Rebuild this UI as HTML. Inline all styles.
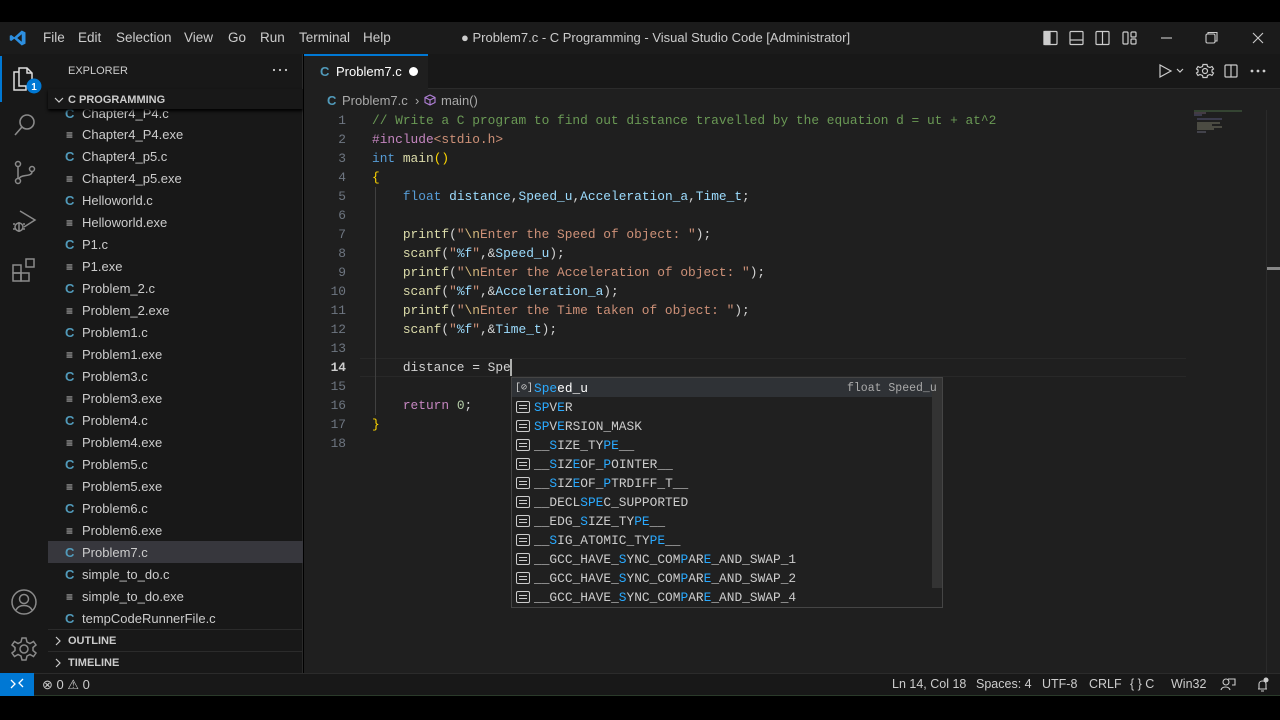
<!DOCTYPE html>
<html><head><meta charset="utf-8"><style>
*{margin:0;padding:0;box-sizing:border-box}
body{width:1280px;height:720px;background:#000;position:relative;overflow:hidden;font-family:"Liberation Sans",sans-serif;font-size:13px;color:#ccc}
.a{position:absolute}
.ui{white-space:nowrap}
.mono{font-family:"Liberation Mono",monospace;font-size:12.85px;white-space:pre}
.ln{position:absolute;left:318px;width:28px;text-align:right;color:#6e7681;font-family:"Liberation Mono",monospace;font-size:12.85px;line-height:19px}
.cl{position:absolute;left:372px;line-height:19px}
.cm{color:#6a9955}.kw{color:#569cd6}.pp{color:#c586c0}.st{color:#ce9178}.fn{color:#dcdcaa}.vr{color:#9cdcfe}.es{color:#d7ba7d}.nu{color:#b5cea8}.br{color:#ffd700}.pl{color:#d4d4d4}
.fi{position:absolute;left:48px;width:255px;height:22px;line-height:22px}
.fi .ic{position:absolute;left:17px;font-weight:bold;color:#519aba;font-size:13px}
.fi .ex{position:absolute;left:18px;top:0;color:#ccc;font-size:12px}
.fi .nm{position:absolute;left:34px;color:#ccc}
.sg{position:absolute;left:0;width:431px;height:19px;line-height:19px}
.sg .i{position:absolute;left:4px;top:3px;width:14px;height:12px;border:1.3px solid #ccc;border-radius:2px}
.sg .i:before{content:"";position:absolute;left:2px;right:2px;top:3px;height:1.3px;background:#ccc;box-shadow:0 3px 0 #ccc}
.sg .t{position:absolute;left:22px;color:#ccc}
.h{color:#2aaaff}
</style></head><body>
<div class="a" style="left:0;top:22px;width:1280px;height:32px;background:#1b1b1b"></div>
<svg class="a" style="left:9px;top:29px" width="18" height="18" viewBox="0 0 24 24"><path d="M17 2 L22 4.5 V19.5 L17 22 L7 13 L3 16 L1 15 V9 L3 8 L7 11 L17 2 Z M17 7 L11 12 L17 17 Z" fill="#2d8fe0"/></svg>
<div class="a ui" style="top:30px;left:43px;font-size:13.5px;color:#ccc">
<span style="position:absolute;left:0">File</span><span style="position:absolute;left:35px">Edit</span><span style="position:absolute;left:73px">Selection</span><span style="position:absolute;left:141px">View</span><span style="position:absolute;left:185px">Go</span><span style="position:absolute;left:217px">Run</span><span style="position:absolute;left:256px">Terminal</span><span style="position:absolute;left:320px">Help</span></div>
<div class="a ui" style="left:461px;top:30px;font-size:13px;color:#ccc">● Problem7.c - C Programming - Visual Studio Code [Administrator]</div>
<svg class="a" style="left:1042px;top:30px" width="130" height="16" fill="none" stroke="#ccc" stroke-width="1.2">
<rect x="2" y="1.5" width="13" height="13" rx="1"/><rect x="2" y="1.5" width="6" height="13" fill="#ccc"/>
<rect x="28" y="1.5" width="13" height="13" rx="1"/><line x1="28" y1="10" x2="41" y2="10"/>
<rect x="54" y="1.5" width="13" height="13" rx="1"/><line x1="60.5" y1="1.5" x2="60.5" y2="14.5"/>
<rect x="81" y="2" width="5" height="12" rx="1"/><rect x="89" y="2" width="5" height="5" rx="1"/><rect x="89" y="9" width="5" height="5" rx="1"/></svg>
<svg class="a" style="left:1158px;top:30px" width="110" height="16" fill="none" stroke="#ccc" stroke-width="1.1">
<line x1="3" y1="8" x2="14" y2="8"/><rect x="48" y="4" width="9" height="9" rx="1.5"/><path d="M50 4 V2.5 H59 V11 H57"/><path d="M95 3 L105 13 M105 3 L95 13"/></svg>
<div class="a" style="left:0;top:54px;width:48px;height:619px;background:#181818"></div>
<div class="a" style="left:0;top:56px;width:2px;height:46px;background:#0078d4"></div>
<svg class="a" style="left:10px;top:62px" width="34" height="34" fill="none" stroke="#ddd" stroke-width="1.5"><path d="M9 6 H17 L22 11 V24 H9 Z"/><path d="M17 6 V11 H22"/><path d="M9 10 H4 V28 H16 V24"/><circle cx="24" cy="24" r="7.5" fill="#0078d4" stroke="none"/><text x="24" y="28" font-size="10" fill="#fff" stroke="none" text-anchor="middle" font-family="Liberation Sans" font-weight="bold">1</text></svg>
<svg class="a" style="left:12px;top:112px" width="26" height="26" fill="none" stroke="#8a8a8a" stroke-width="1.6"><circle cx="15" cy="10" r="7"/><line x1="10" y1="15" x2="3" y2="23"/></svg>
<svg class="a" style="left:12px;top:160px" width="26" height="26" fill="none" stroke="#8a8a8a" stroke-width="1.5"><circle cx="6" cy="4" r="2.5"/><circle cx="6" cy="21" r="2.5"/><circle cx="20" cy="9" r="2.5"/><path d="M6 7 V18 M20 12 C20 17 8 14 7 19"/></svg>
<svg class="a" style="left:11px;top:208px" width="28" height="28" fill="none" stroke="#8a8a8a" stroke-width="1.5"><path d="M9 3 L24 12 L13 19"/><circle cx="8" cy="19" r="4"/><path d="M2 16 H4 M2 21 H4 M12 16 H14 M12 21 H14 M8 14 V24"/></svg>
<svg class="a" style="left:11px;top:256px" width="28" height="28" fill="none" stroke="#8a8a8a" stroke-width="1.5"><rect x="2" y="9" width="8" height="8"/><rect x="2" y="17" width="8" height="8"/><rect x="10" y="17" width="8" height="8"/><rect x="15" y="3" width="8" height="8"/></svg>
<svg class="a" style="left:10px;top:588px" width="28" height="28" fill="none" stroke="#8a8a8a" stroke-width="1.5"><circle cx="14" cy="14" r="12"/><circle cx="14" cy="11" r="4.5"/><path d="M6 22 C9 16 19 16 22 22"/></svg>
<svg class="a" style="left:10px;top:635px" width="28" height="28" fill="none" stroke="#8a8a8a" stroke-width="1.5"><circle cx="14" cy="14" r="4"/><path d="M12 3 H16 L17 7 L20 8.5 L23.5 6.5 L26 10 L23 12.5 V15.5 L26 18 L23.5 21.5 L20 19.5 L17 21 L16 25 H12 L11 21 L8 19.5 L4.5 21.5 L2 18 L5 15.5 V12.5 L2 10 L4.5 6.5 L8 8.5 L11 7 Z"/></svg>
<div class="a" style="left:48px;top:54px;width:255px;height:619px;background:#181818;border-right:1px solid #2b2b2b"></div>
<div class="a ui" style="left:68px;top:65px;font-size:11px;color:#ccc">EXPLORER</div>
<svg class="a" style="left:272px;top:68px" width="18" height="4"><circle cx="2" cy="2" r="1.1" fill="#ccc"/><circle cx="8" cy="2" r="1.1" fill="#ccc"/><circle cx="14" cy="2" r="1.1" fill="#ccc"/></svg>
<div class="a" style="left:48px;top:108px;width:255px;height:520px;overflow:hidden">
<div style="position:absolute;left:0;top:-5px;width:255px">
<div class="fi" style="left:0;top:0"><span class="ic">C</span><span class="nm">Chapter4_P4.c</span></div>
</div></div>
<div class="a" style="left:48px;top:89px;width:255px;height:20px;background:#181818;box-shadow:0 2px 3px #000"></div>
<svg class="a" style="left:54px;top:96px" width="10" height="8" fill="none" stroke="#ccc" stroke-width="1.2"><path d="M1 2 L5 6 L9 2"/></svg>
<div class="a ui" style="left:68px;top:94px;font-size:11px;font-weight:bold;color:#ccc">C PROGRAMMING</div>
<div class="a" style="left:48px;top:541px;width:255px;height:22px;background:#37373d"></div>
<div id="files"></div>
<div class="a" style="left:48px;top:629px;width:255px;height:1px;background:#2b2b2b"></div>
<div class="a" style="left:48px;top:651px;width:255px;height:1px;background:#2b2b2b"></div>
<svg class="a" style="left:54px;top:636px" width="8" height="10" fill="none" stroke="#ccc" stroke-width="1.2"><path d="M2 1 L6 5 L2 9"/></svg>
<svg class="a" style="left:54px;top:658px" width="8" height="10" fill="none" stroke="#ccc" stroke-width="1.2"><path d="M2 1 L6 5 L2 9"/></svg>
<div class="a ui" style="left:68px;top:635px;font-size:11px;font-weight:bold;color:#ccc">OUTLINE</div>
<div class="a ui" style="left:68px;top:657px;font-size:11px;font-weight:bold;color:#ccc">TIMELINE</div>
<div class="a" style="left:304px;top:54px;width:976px;height:619px;background:#1f1f1f"></div>
<div class="a" style="left:304px;top:54px;width:976px;height:35px;background:#181818;border-bottom:1px solid #2b2b2b"></div>
<div class="a" style="left:304px;top:54px;width:124px;height:35px;background:#1f1f1f;border-top:2px solid #0078d4"></div>
<div class="a ui" style="left:320px;top:64px;color:#519aba;font-weight:bold">C</div>
<div class="a ui" style="left:336px;top:64px;color:#fff">Problem7.c</div>
<div class="a" style="left:409px;top:67px;width:9px;height:9px;border-radius:50%;background:#fff"></div>
<svg class="a" style="left:1158px;top:63px" width="110" height="16" fill="none" stroke="#ccc" stroke-width="1.2"><path d="M2 2 L13 8 L2 14 Z"/><path d="M19 6 L22 9 L25 6"/><circle cx="47" cy="8" r="2.5"/><path d="M45 1.5 H49 L49.5 3.5 L52 4.5 L54 3.5 L55.5 6 L54 7 V9 L55.5 10 L54 12.5 L52 11.5 L49.5 12.5 L49 14.5 H45 L44.5 12.5 L42 11.5 L40 12.5 L38.5 10 L40 9 V7 L38.5 6 L40 3.5 L42 4.5 L44.5 3.5 Z"/><rect x="67" y="2" width="12" height="12" rx="1"/><line x1="73" y1="2" x2="73" y2="14"/><circle cx="94" cy="8" r=".8" fill="#ccc"/><circle cx="100" cy="8" r=".8" fill="#ccc"/><circle cx="106" cy="8" r=".8" fill="#ccc"/></svg>
<div class="a ui" style="left:327px;top:93px;color:#519aba;font-weight:bold">C</div>
<div class="a ui" style="left:342px;top:93px;color:#a9a9a9">Problem7.c &nbsp;›</div>
<svg class="a" style="left:424px;top:94px" width="12" height="12" fill="none" stroke="#b180d7" stroke-width="1.1"><path d="M6 1 L11 3.5 V8.5 L6 11 L1 8.5 V3.5 Z M1 3.5 L6 6 L11 3.5 M6 6 V11"/></svg>
<div class="a ui" style="left:441px;top:93px;color:#a9a9a9">main()</div>
<div class="a" style="left:360px;top:358px;width:826px;height:19px;border-top:1px solid #282828;border-bottom:1px solid #282828"></div>
<div class="a" style="left:375px;top:187px;width:1px;height:228px;background:#404040"></div>
<div id="code"></div>
<div class="a" style="left:510px;top:359px;width:2px;height:17px;background:#aeafad"></div>
<svg class="a" style="left:1192px;top:110px" width="60" height="24"><g stroke-width="1"><line x1="2" y1="1" x2="50" y2="1" stroke="#4a6a44"/><line x1="2" y1="3" x2="14" y2="3" stroke="#6a5a6a"/><line x1="2" y1="5" x2="10" y2="5" stroke="#557"/><line x1="5" y1="9" x2="30" y2="9" stroke="#557"/><line x1="5" y1="13" x2="28" y2="13" stroke="#776"/><line x1="5" y1="15" x2="20" y2="15" stroke="#776"/><line x1="5" y1="17" x2="30" y2="17" stroke="#776"/><line x1="5" y1="19" x2="22" y2="19" stroke="#776"/><line x1="5" y1="22" x2="14" y2="22" stroke="#667"/></g></svg>
<div class="a" style="left:1266px;top:267px;width:14px;height:3px;background:#888"></div>
<div class="a" style="left:1266px;top:110px;width:1px;height:563px;background:#2a2a2a"></div>
<div class="a" style="left:511px;top:377px;width:432px;height:231px;background:#202020;border:1px solid #454545;overflow:hidden">
<div style="position:absolute;left:0;top:0;width:420px;height:19px;background:#2f3236"></div>
<div class="a" style="left:420px;top:0;width:10px;height:210px;background:#333"></div>
<div id="sg" class="mono" style="position:absolute;left:0;top:1px"></div>
</div>
<div class="a" style="left:0;top:673px;width:1280px;height:23px;background:#181818;border-top:1px solid #2b2b2b;border-bottom:1px solid #2a3a2a"></div>
<div class="a" style="left:0;top:673px;width:34px;height:23px;background:#0078d4"></div>
<svg class="a" style="left:10px;top:678px" width="14" height="12" fill="none" stroke="#fff" stroke-width="1.3"><path d="M1 10 L5 6 L1 2 M13 1 L9 5 L13 9"/></svg>
<div class="a ui" style="left:42px;top:677px;color:#ccc">⊗ 0 ⚠ 0</div>
<div class="a ui" style="left:892px;top:677px;color:#ccc;font-size:12.5px">Ln 14, Col 18</div>
<div class="a ui" style="left:976px;top:677px;color:#ccc;font-size:12.5px">Spaces: 4</div>
<div class="a ui" style="left:1042px;top:677px;color:#ccc;font-size:12.5px">UTF-8</div>
<div class="a ui" style="left:1089px;top:677px;color:#ccc;font-size:12.5px">CRLF</div>
<div class="a ui" style="left:1130px;top:677px;color:#ccc;font-size:12.5px">{ } C</div>
<div class="a ui" style="left:1171px;top:677px;color:#ccc;font-size:12.5px">Win32</div>
<svg class="a" style="left:1220px;top:677px" width="50" height="15" fill="none" stroke="#ccc" stroke-width="1.1"><circle cx="6" cy="5" r="3"/><path d="M1 13 C2 9 9 9 10 13 M8 2 H15 V8 H12"/><path d="M39 12 V7 C39 3 46 3 46 7 V12 H38 H47 M41 14 H44"/><circle cx="46" cy="3" r="2" fill="#ccc"/></svg>
<script>
var files=[["c","Chapter4_P4.exe",1],["c","Chapter4_p5.c",0],["e","Chapter4_p5.exe",1],["c","Helloworld.c",0],["e","Helloworld.exe",1],["c","P1.c",0],["e","P1.exe",1],["c","Problem_2.c",0],["e","Problem_2.exe",1],["c","Problem1.c",0],["e","Problem1.exe",1],["c","Problem3.c",0],["e","Problem3.exe",1],["c","Problem4.c",0],["e","Problem4.exe",1],["c","Problem5.c",0],["e","Problem5.exe",1],["c","Problem6.c",0],["e","Problem6.exe",1],["c","Problem7.c",0],["c","simple_to_do.c",0],["e","simple_to_do.exe",1],["c","tempCodeRunnerFile.c",0]];
var h="";files.forEach(function(f,i){var y=124+22*i;h+='<div class="fi" style="top:'+y+'px">'+(f[2]?'<span class="ex">&#8801;</span>':'<span class="ic">C</span>')+'<span class="nm">'+f[1]+'</span></div>';});
document.getElementById("files").innerHTML=h;
var code=['<span class="cm">// Write a C program to find out distance travelled by the equation d = ut + at^2</span>',
'<span class="pp">#include</span><span class="st">&lt;stdio.h&gt;</span>',
'<span class="kw">int</span> <span class="fn">main</span><span class="br">()</span>',
'<span class="br">{</span>',
'    <span class="kw">float</span> <span class="vr">distance</span><span class="pl">,</span><span class="vr">Speed_u</span><span class="pl">,</span><span class="vr">Acceleration_a</span><span class="pl">,</span><span class="vr">Time_t</span><span class="pl">;</span>',
'',
'    <span class="fn">printf</span><span class="pl">(</span><span class="st">"</span><span class="es">\\n</span><span class="st">Enter the Speed of object: "</span><span class="pl">);</span>',
'    <span class="fn">scanf</span><span class="pl">(</span><span class="st">"</span><span class="vr">%f</span><span class="st">"</span><span class="pl">,&amp;</span><span class="vr">Speed_u</span><span class="pl">);</span>',
'    <span class="fn">printf</span><span class="pl">(</span><span class="st">"</span><span class="es">\\n</span><span class="st">Enter the Acceleration of object: "</span><span class="pl">);</span>',
'    <span class="fn">scanf</span><span class="pl">(</span><span class="st">"</span><span class="vr">%f</span><span class="st">"</span><span class="pl">,&amp;</span><span class="vr">Acceleration_a</span><span class="pl">);</span>',
'    <span class="fn">printf</span><span class="pl">(</span><span class="st">"</span><span class="es">\\n</span><span class="st">Enter the Time taken of object: "</span><span class="pl">);</span>',
'    <span class="fn">scanf</span><span class="pl">(</span><span class="st">"</span><span class="vr">%f</span><span class="st">"</span><span class="pl">,&amp;</span><span class="vr">Time_t</span><span class="pl">);</span>',
'',
'    <span class="pl">distance = Spe</span>',
'',
'    <span class="pp">return</span> <span class="nu">0</span><span class="pl">;</span>',
'<span class="br">}</span>',''];
h="";code.forEach(function(c,i){var y=111+19*i;h+='<div class="ln" style="top:'+y+'px;'+(i==13?'color:#ccc;font-weight:bold':'')+'">'+(i+1)+'</div><div class="cl mono" style="top:'+y+'px">'+c+'</div>';});
document.getElementById("code").innerHTML=h;
var s=['<span class="h">Spe</span>ed_u','<span class="h">SP</span>V<span class="h">E</span>R','<span class="h">SP</span>V<span class="h">E</span>RSION_MASK','__<span class="h">S</span>IZE_TY<span class="h">PE</span>__','__<span class="h">S</span>IZ<span class="h">E</span>OF_<span class="h">P</span>OINTER__','__<span class="h">S</span>IZ<span class="h">E</span>OF_<span class="h">P</span>TRDIFF_T__','__DECL<span class="h">SPE</span>C_SUPPORTED','__EDG_<span class="h">S</span>IZE_TY<span class="h">PE</span>__','__<span class="h">S</span>IG_ATOMIC_TY<span class="h">PE</span>__','__GCC_HAVE_<span class="h">S</span>YNC_COM<span class="h">P</span>AR<span class="h">E</span>_AND_SWAP_1','__GCC_HAVE_<span class="h">S</span>YNC_COM<span class="h">P</span>AR<span class="h">E</span>_AND_SWAP_2','__GCC_HAVE_<span class="h">S</span>YNC_COM<span class="h">P</span>AR<span class="h">E</span>_AND_SWAP_4'];
h="";s.forEach(function(t,i){h+='<div class="sg" style="top:'+(19*i)+'px">'+(i==0?'<span style="position:absolute;left:3px;color:#ccc;font-size:10px">[&#8856;]</span>':'<span class="i"></span>')+'<span class="t"'+(i==0?' style="color:#fff"':'')+'>'+t+'</span>'+(i==0?'<span style="position:absolute;left:335px;color:#aaa;font-size:11.5px">float Speed_u</span>':'')+'</div>';});
document.getElementById("sg").innerHTML=h;
</script>
</body></html>
